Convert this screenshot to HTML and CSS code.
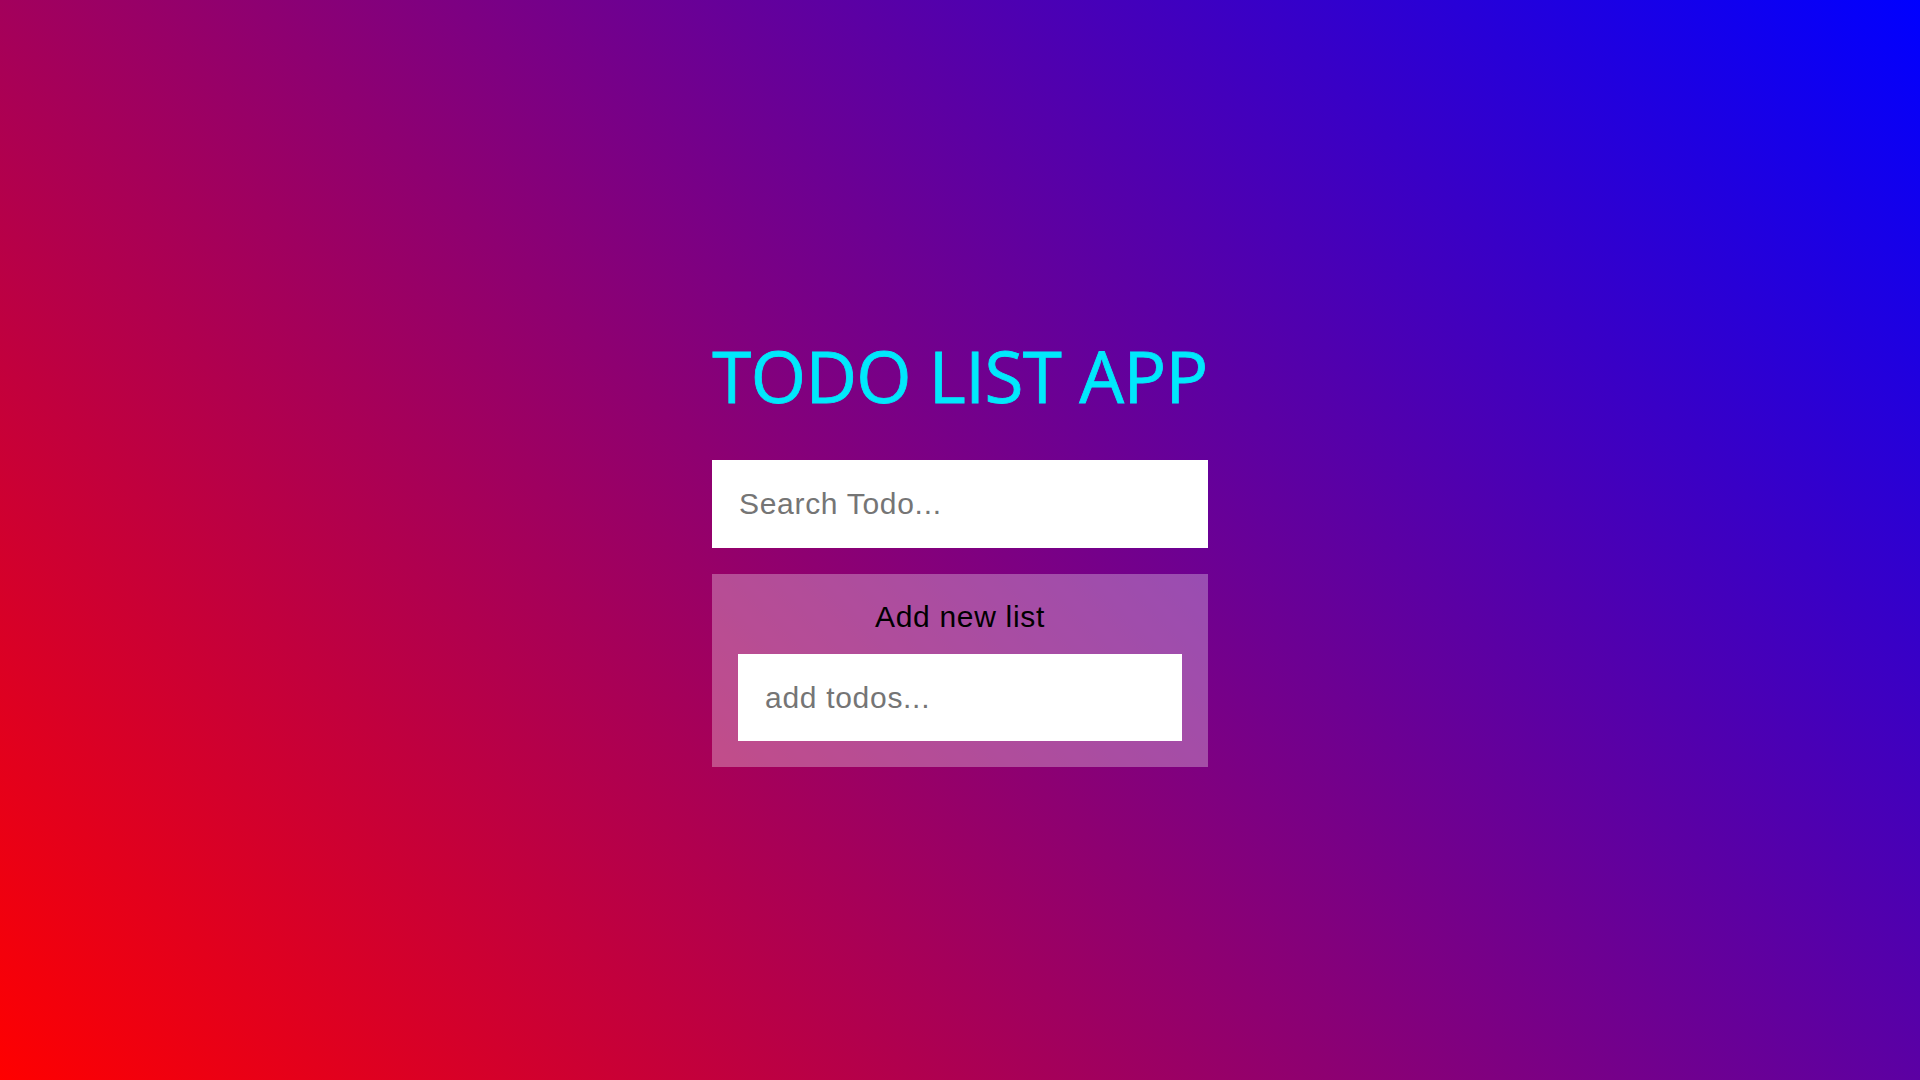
FILE: index.html
```html
<!DOCTYPE html>
<html lang="en">
<head>
<meta charset="utf-8">
<title>Todo List App</title>
<link rel="stylesheet" href="styles.css">
</head>
<body>
  <main class="app">
    <h1 class="title">TODO LIST APP</h1>
    <input class="field search" type="text" placeholder="Search Todo...">
    <form class="add-box">
      <label class="add-label" for="add">Add new list</label>
      <input class="field" id="add" type="text" placeholder="add todos...">
    </form>
  </main>
</body>
</html>
```

FILE: styles.css
```css
html, body {
  margin: 0;
  height: 100%;
}

body {
  background: linear-gradient(45deg, #ff0000, #0000ff);
  font-family: "Liberation Sans", Arial, sans-serif;
}

.app {
  width: 496px;
  margin: 0 auto;
  padding-top: 340px;
  display: flex;
  flex-direction: column;
}

.title {
  margin: 0 0 48px;
  font-family: "Open Sans", "Noto Sans", sans-serif;
  font-weight: 400;
  font-size: 71px;
  line-height: 72px;
  letter-spacing: -0.6px;
  -webkit-text-stroke: 0.8px #00e8fc;
  color: #00e8fc;
  text-align: center;
  white-space: nowrap;
}

.field {
  display: block;
  box-sizing: border-box;
  width: 100%;
  height: 88px;
  margin: 0;
  padding: 0 27px;
  border: none;
  outline: none;
  background: #ffffff;
  font-family: "Liberation Sans", Arial, sans-serif;
  font-size: 30px;
  letter-spacing: 0.7px;
  color: #333333;
}

.field::placeholder {
  color: #757575;
}

.search {
  margin-bottom: 26px;
}

.add-box {
  margin: 0;
  padding: 26px;
  background: rgba(255, 255, 255, 0.3);
  display: flex;
  flex-direction: column;
  gap: 20px;
}

.add-box .field {
  height: 87px;
}

.add-label {
  font-size: 30px;
  line-height: 34px;
  letter-spacing: 0.7px;
  color: #000000;
  text-align: center;
}
```
